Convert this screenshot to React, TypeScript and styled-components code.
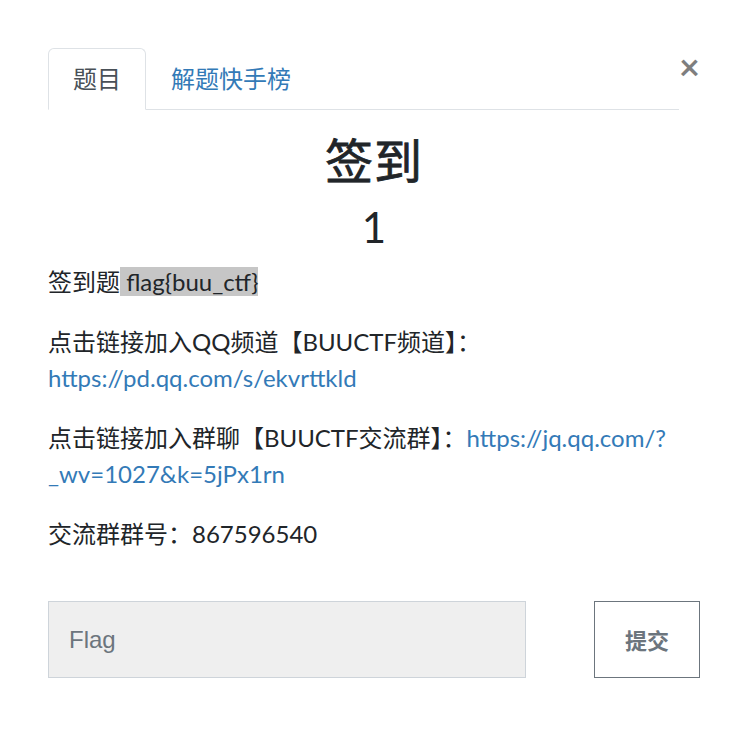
import React from "react";
import styled, { createGlobalStyle } from "styled-components";

const GlobalStyle = createGlobalStyle`
  html, body {
    margin: 0;
    padding: 0;
    background: #ffffff;
  }
  body {
    font-family: Lato, "Noto Sans CJK SC", sans-serif;
    color: #212529;
  }
`;

const Dialog = styled.div`
  width: 652px;
  padding: 48px 46px 48px 48px;
`;

const Header = styled.div`
  display: flex;
  align-items: flex-start;
`;

const TabList = styled.ul`
  flex: 1;
  display: flex;
  margin: 0;
  padding: 0;
  list-style: none;
  border-bottom: 1px solid #dee2e6;
`;

const Tab = styled.li<{ $active?: boolean }>`
  margin-bottom: -1px;
  padding: 12px 24px;
  font-size: 24px;
  line-height: 36px;
  border: 1px solid ${(p) => (p.$active ? "#dee2e6" : "transparent")};
  border-bottom-color: ${(p) => (p.$active ? "#ffffff" : "transparent")};
  border-radius: 6px 6px 0 0;
  background: ${(p) => (p.$active ? "#ffffff" : "transparent")};
  color: ${(p) => (p.$active ? "#495057" : "#337ab7")};
  cursor: pointer;
`;

const Close = styled.button`
  width: 21px;
  margin-top: 0;
  padding: 0;
  border: 0;
  background: transparent;
  font-family: Lato, sans-serif;
  font-size: 36px;
  font-weight: 700;
  line-height: 1;
  color: #000000;
  opacity: 0.5;
  text-align: center;
  cursor: pointer;
`;

const Title = styled.h2`
  margin: 22px 0 12px;
  font-size: 48px;
  font-weight: 400;
  line-height: 1.2;
  letter-spacing: 1px;
  text-align: center;
  -webkit-text-stroke: 0.8px currentColor;
`;

const Points = styled.h3`
  margin: 0 0 12px;
  font-size: 42px;
  font-weight: 400;
  line-height: 1.2;
  text-align: center;
`;

const Paragraph = styled.p`
  margin: 0 0 24px;
  font-size: 24px;
  line-height: 36px;
`;

const Highlight = styled.span`
  background: #c6c6c6;
`;

const Link = styled.a`
  color: #337ab7;
  text-decoration: none;
`;

const SubmitRow = styled.form`
  display: flex;
  justify-content: space-between;
  margin-top: 49px;
`;

const FlagInput = styled.input`
  box-sizing: border-box;
  width: 478px;
  height: 77px;
  padding: 2px 20px 0;
  border: 1px solid #ced4da;
  border-radius: 0;
  background: #efefef;
  font-family: "Liberation Sans", Arial, sans-serif;
  font-size: 24px;
  color: #495057;
  outline: none;

  &::placeholder {
    color: #6c757d;
  }
`;

const SubmitButton = styled.button`
  box-sizing: border-box;
  width: 106px;
  height: 77px;
  border: 1px solid #6c757d;
  border-radius: 0;
  background: #ffffff;
  font-family: "Liberation Sans", "Noto Sans CJK SC", sans-serif;
  font-size: 22px;
  font-weight: 700;
  color: #6c757d;
  cursor: pointer;
`;

export default function App() {
  return (
    <>
      <GlobalStyle />
      <Dialog>
        <Header>
          <TabList>
            <Tab $active>题目</Tab>
            <Tab>解题快手榜</Tab>
          </TabList>
          <Close type="button" aria-label="Close">×</Close>
        </Header>
        <Title>签到</Title>
        <Points>1</Points>
        <Paragraph>
          签到题<Highlight> flag{"{"}buu_ctf{"}"}</Highlight>
        </Paragraph>
        <Paragraph>
          点击链接加入QQ频道【BUUCTF频道】：
          <Link href="#">https://pd.qq.com/s/ekvrttkld</Link>
        </Paragraph>
        <Paragraph>
          点击链接加入群聊【BUUCTF交流群】：
          <Link href="#">https://jq.qq.com/?_wv=1027&amp;k=5jPx1rn</Link>
        </Paragraph>
        <Paragraph>交流群群号：867596540</Paragraph>
        <SubmitRow onSubmit={(e) => e.preventDefault()}>
          <FlagInput placeholder="Flag" />
          <SubmitButton type="submit">提交</SubmitButton>
        </SubmitRow>
      </Dialog>
    </>
  );
}
